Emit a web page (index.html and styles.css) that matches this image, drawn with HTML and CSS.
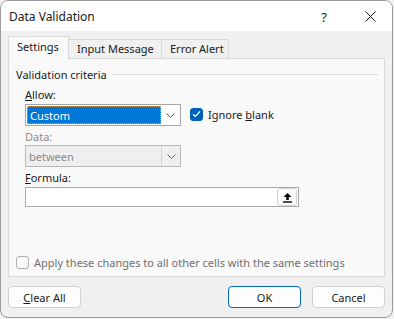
FILE: index.html
```html
<!DOCTYPE html>
<html>
<head>
<meta charset="utf-8">
<link rel="stylesheet" href="styles.css">
</head>
<body>
<div class="window">
  <div class="titlebar">
    <span class="title">Data Validation</span>
    <span class="help">?</span>
    <svg class="close" width="11" height="11" viewBox="0 0 11 11"><path d="M0.5 0.5 L10.5 10.5 M10.5 0.5 L0.5 10.5" stroke="#1a1a1a" stroke-width="1" fill="none"/></svg>
  </div>
  <div class="content">
    <div class="tabs">
      <div class="tab active" style="width:61px">Settings</div>
      <div class="tab" style="width:94px">Input Message</div>
      <div class="tab" style="width:68px">Error Alert</div>
    </div>
    <div class="panel">
      <div class="legend"><span>Validation criteria</span><div class="rule"></div></div>
      <div class="group">
        <div class="label first"><u>A</u>llow:</div>
        <div class="row">
          <div class="combo">
            <div class="sel"><span>Custom</span></div>
            <div class="drop"><svg width="9" height="5" viewBox="0 0 9 5"><path d="M0.5 0.5 L4.5 4.5 L8.5 0.5" stroke="#555" stroke-width="1" fill="none"/></svg></div>
          </div>
          <label class="check">
            <span class="box on"><svg width="9" height="8" viewBox="0 0 9 8"><path d="M1 4.2 L3.4 6.4 L8 1.4" stroke="#fff" stroke-width="1.3" fill="none"/></svg></span>
            <span>Ignore <u>b</u>lank</span>
          </label>
        </div>
        <div class="label gray">Data:</div>
        <div class="combo disabled">
          <div class="val">between</div>
          <div class="drop"><svg width="9" height="5" viewBox="0 0 9 5"><path d="M0.5 0.5 L4.5 4.5 L8.5 0.5" stroke="#666" stroke-width="1" fill="none"/></svg></div>
        </div>
        <div class="label formula"><u>F</u>ormula:</div>
        <div class="input">
          <div class="pick"><svg width="11" height="11" viewBox="0 0 11 11"><path d="M5.5 1 L1.5 5 L4.2 5 L4.2 8 L6.8 8 L6.8 5 L9.5 5 Z" fill="#000"/><rect x="1" y="9.3" width="9" height="1.4" fill="#000"/></svg></div>
        </div>
      </div>
      <label class="check apply">
        <span class="box"></span>
        <span>Apply these changes to all other cells with the same settings</span>
      </label>
    </div>
    <div class="buttons">
      <button class="btn"><u>C</u>lear All</button>
      <div class="spacer"></div>
      <button class="btn primary">OK</button>
      <button class="btn">Cancel</button>
    </div>
  </div>
</div>
</body>
</html>
```
FILE: styles.css
```css
html, body {
  margin: 0;
  padding: 0;
  background: #f3f3f3;
}
body {
  font-family: "Segoe UI", "Noto Sans", sans-serif;
  font-size: 11px;
  color: #1a1a1a;
}
.window {
  width: 393px;
  height: 318px;
  box-sizing: border-box;
  border: 1px solid #9a9a9a;
  border-radius: 8px;
  overflow: hidden;
  background: #f0f0f0;
  display: flex;
  flex-direction: column;
}
.titlebar {
  height: 30px;
  background: #fff;
  display: flex;
  align-items: center;
  padding-left: 8px;
  flex-shrink: 0;
}
.title {
  font-size: 12px;
  flex: 1;
  padding-top: 1px;
}
.help {
  font-size: 13px;
  margin-right: 38px;
  padding-top: 1px;
}
.close {
  margin-right: 16px;
}
.content {
  padding: 5px 7px 0 7px;
  display: flex;
  flex-direction: column;
}
.tabs {
  display: flex;
  align-items: flex-end;
  height: 22px;
  position: relative;
  z-index: 2;
}
.tab {
  box-sizing: border-box;
  height: 19px;
  border: 1px solid #d9d9d9;
  border-bottom: none;
  background: #f0f0f0;
  padding-left: 8px;
  line-height: 17px;
  margin-left: -1px;
}
.tab:first-child { margin-left: 0; }
.tab.active {
  height: 23px;
  background: #f9f9f9;
  margin-bottom: -1px;
  line-height: 19px;
  z-index: 3;
  position: relative;
}
.panel {
  box-sizing: border-box;
  width: 377px;
  height: 219px;
  border: 1px solid #d9d9d9;
  background: #f9f9f9;
  display: flex;
  flex-direction: column;
  padding: 7px 6px 0 7px;
}
.legend {
  display: flex;
  align-items: center;
  height: 16px;
}
.legend .rule {
  flex: 1;
  height: 1px;
  background: #dcdcdc;
  margin-left: 5px;
}
.group {
  padding-left: 9px;
  display: flex;
  flex-direction: column;
}
.label {
  height: 16px;
  line-height: 16px;
  margin-top: 3px;
}
.label.first {
  margin-top: 5px;
  margin-bottom: 1px;
}
.label.formula {
  margin-bottom: 1px;
}
.label.gray { color: #8c8c8c; }
.row {
  display: flex;
  align-items: center;
}
.combo {
  box-sizing: border-box;
  width: 156px;
  height: 22px;
  border: 1px solid #a8a8a8;
  background: #fff;
  display: flex;
  padding: 1px;
}
.combo .sel {
  flex: 1;
  background: #0078d7;
  color: #fff;
  border: 1px dotted #e0a060;
  display: flex;
  align-items: center;
  padding-left: 2px;
}
.combo .drop {
  width: 17px;
  display: flex;
  align-items: center;
  justify-content: center;
  padding-left: 1px;
}
.combo.disabled {
  background: #efefef;
  border-color: #b8b8b8;
  padding: 0;
}
.combo.disabled .val {
  flex: 1;
  color: #8a8a8a;
  display: flex;
  align-items: center;
  padding-left: 3px;
}
.combo.disabled .drop {
  border-left: 1px solid #d5d5d5;
  width: 17px;
}
.check {
  display: flex;
  align-items: center;
}
.row .check {
  margin-left: 9px;
  margin-top: -2px;
}
.box {
  box-sizing: border-box;
  width: 13px;
  height: 13px;
  border-radius: 3px;
  border: 1px solid #8a8a8a;
  background: #f5f5f5;
  display: flex;
  align-items: center;
  justify-content: center;
  margin-right: 5px;
}
.box.on {
  background: #005fb8;
  border-color: #005fb8;
}
.input {
  box-sizing: border-box;
  width: 274px;
  height: 20px;
  border: 1px solid #a8a8a8;
  background: #fff;
  display: flex;
  justify-content: flex-end;
  padding: 0 1px;
}
.pick {
  box-sizing: border-box;
  width: 20px;
  height: 18px;
  border: 1px solid #d4d4d4;
  border-radius: 3px;
  background: #fdfdfd;
  display: flex;
  align-items: center;
  justify-content: center;
}
.apply {
  margin-top: 48px;
  color: #707070;
}
.apply .box {
  border-color: #b0b0b0;
  background: #f9f9f9;
  margin-right: 5px;
}
.buttons {
  display: flex;
  margin-top: 9px;
  width: 377px;
}
.spacer { flex: 1; }
.btn {
  box-sizing: border-box;
  width: 73px;
  height: 22px;
  border: 1px solid #d0d0d0;
  border-radius: 4px;
  background: #fdfdfd;
  font-family: inherit;
  font-size: 11px;
  color: #1a1a1a;
  padding: 0;
}
.btn.primary {
  border-color: #0067c0;
  margin-right: 11px;
}
```
